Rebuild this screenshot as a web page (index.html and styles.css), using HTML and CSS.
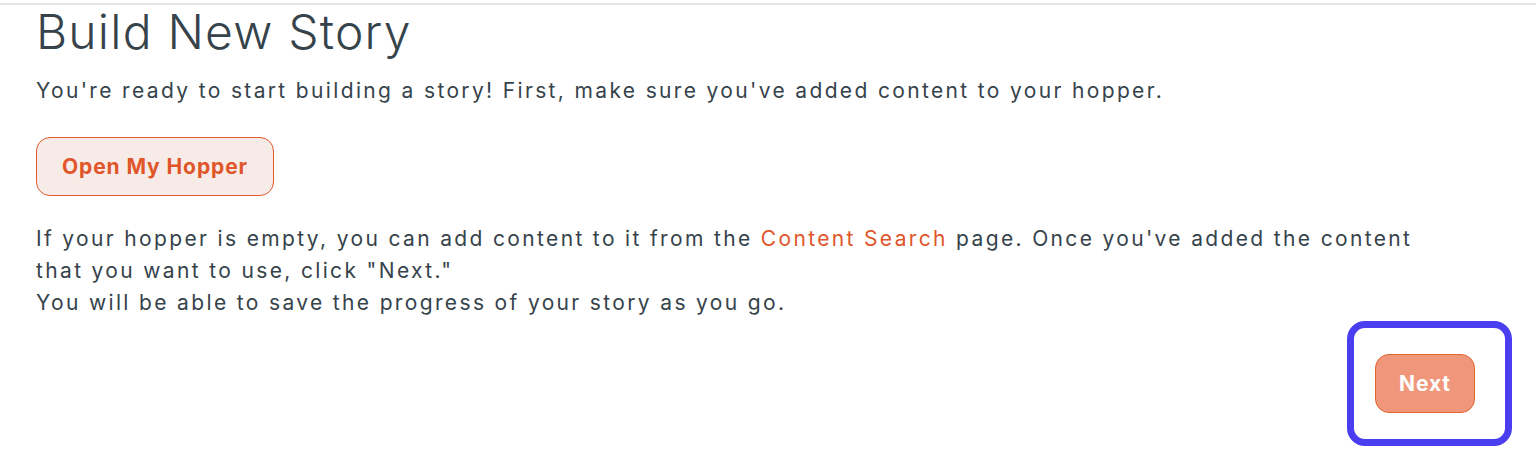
FILE: index.html
```html
<!DOCTYPE html>
<html lang="en">
<head>
<meta charset="utf-8">
<title>Build New Story</title>
<link rel="stylesheet" href="styles.css">
</head>
<body>
<div class="topbar"></div>
<main class="page">
  <h1 class="title">Build New Story</h1>
  <p class="intro">You're ready to start building a story! First, make sure you've added content to your hopper.</p>
  <div class="actions">
    <button class="btn btn-outline" type="button">Open My Hopper</button>
  </div>
  <p class="info">If your hopper is empty, you can add content to it from the <a class="link" href="#">Content Search</a> page. Once you've added the content that you want to use, click "Next."<br>You will be able to save the progress of your story as you go.</p>
  <div class="footer">
    <div class="highlight-wrap">
      <button class="btn btn-primary" type="button">Next</button>
      <span class="highlight"></span>
    </div>
  </div>
</main>
</body>
</html>
```

FILE: styles.css
```css
* { box-sizing: border-box; }
html, body { margin: 0; padding: 0; background: #ffffff; }
body {
  font-family: "Inter", "Open Sans", sans-serif;
  color: #36434b;
  width: 1536px;
  height: 458px;
  overflow: hidden;
}
.topbar {
  height: 5px;
  border-bottom: 2px solid #e3e6ea;
}
.page {
  width: 1475px;
  padding-left: 36px;
}
.title {
  margin: 0;
  font-size: 48px;
  font-weight: 300;
  line-height: 54px;
  letter-spacing: 1.2px;
  color: #36434b;
}
.intro {
  margin: 16px 0 0;
  font-size: 21px;
  line-height: 32px;
  letter-spacing: 2.35px;
}
.actions {
  margin-top: 30px;
}
.btn {
  font-family: inherit;
  font-weight: 700;
  font-size: 21px;
  letter-spacing: 0.9px;
  border-radius: 14px;
  cursor: pointer;
  padding: 0;
}
.btn-outline {
  width: 238px;
  height: 59px;
  background: #f7ebe7;
  border: 1.5px solid #e05a2b;
  color: #e0562a;
}
.info {
  margin: 27px 0 0;
  max-width: 1425px;
  font-size: 21px;
  line-height: 32px;
  letter-spacing: 2.35px;
}
.link { color: #e0562a; text-decoration: none; }
.footer {
  display: flex;
  justify-content: flex-end;
  margin-top: 35px;
}
.highlight-wrap { position: relative; }
.btn-primary {
  width: 100px;
  height: 59px;
  background: #f0967a;
  border: 1.5px solid #e0652f;
  color: #ffffff;
}
.highlight {
  position: absolute;
  top: -33px;
  bottom: -33px;
  left: -28px;
  right: -37px;
  border: 7px solid #4b3df0;
  border-radius: 18px;
  pointer-events: none;
}
```
